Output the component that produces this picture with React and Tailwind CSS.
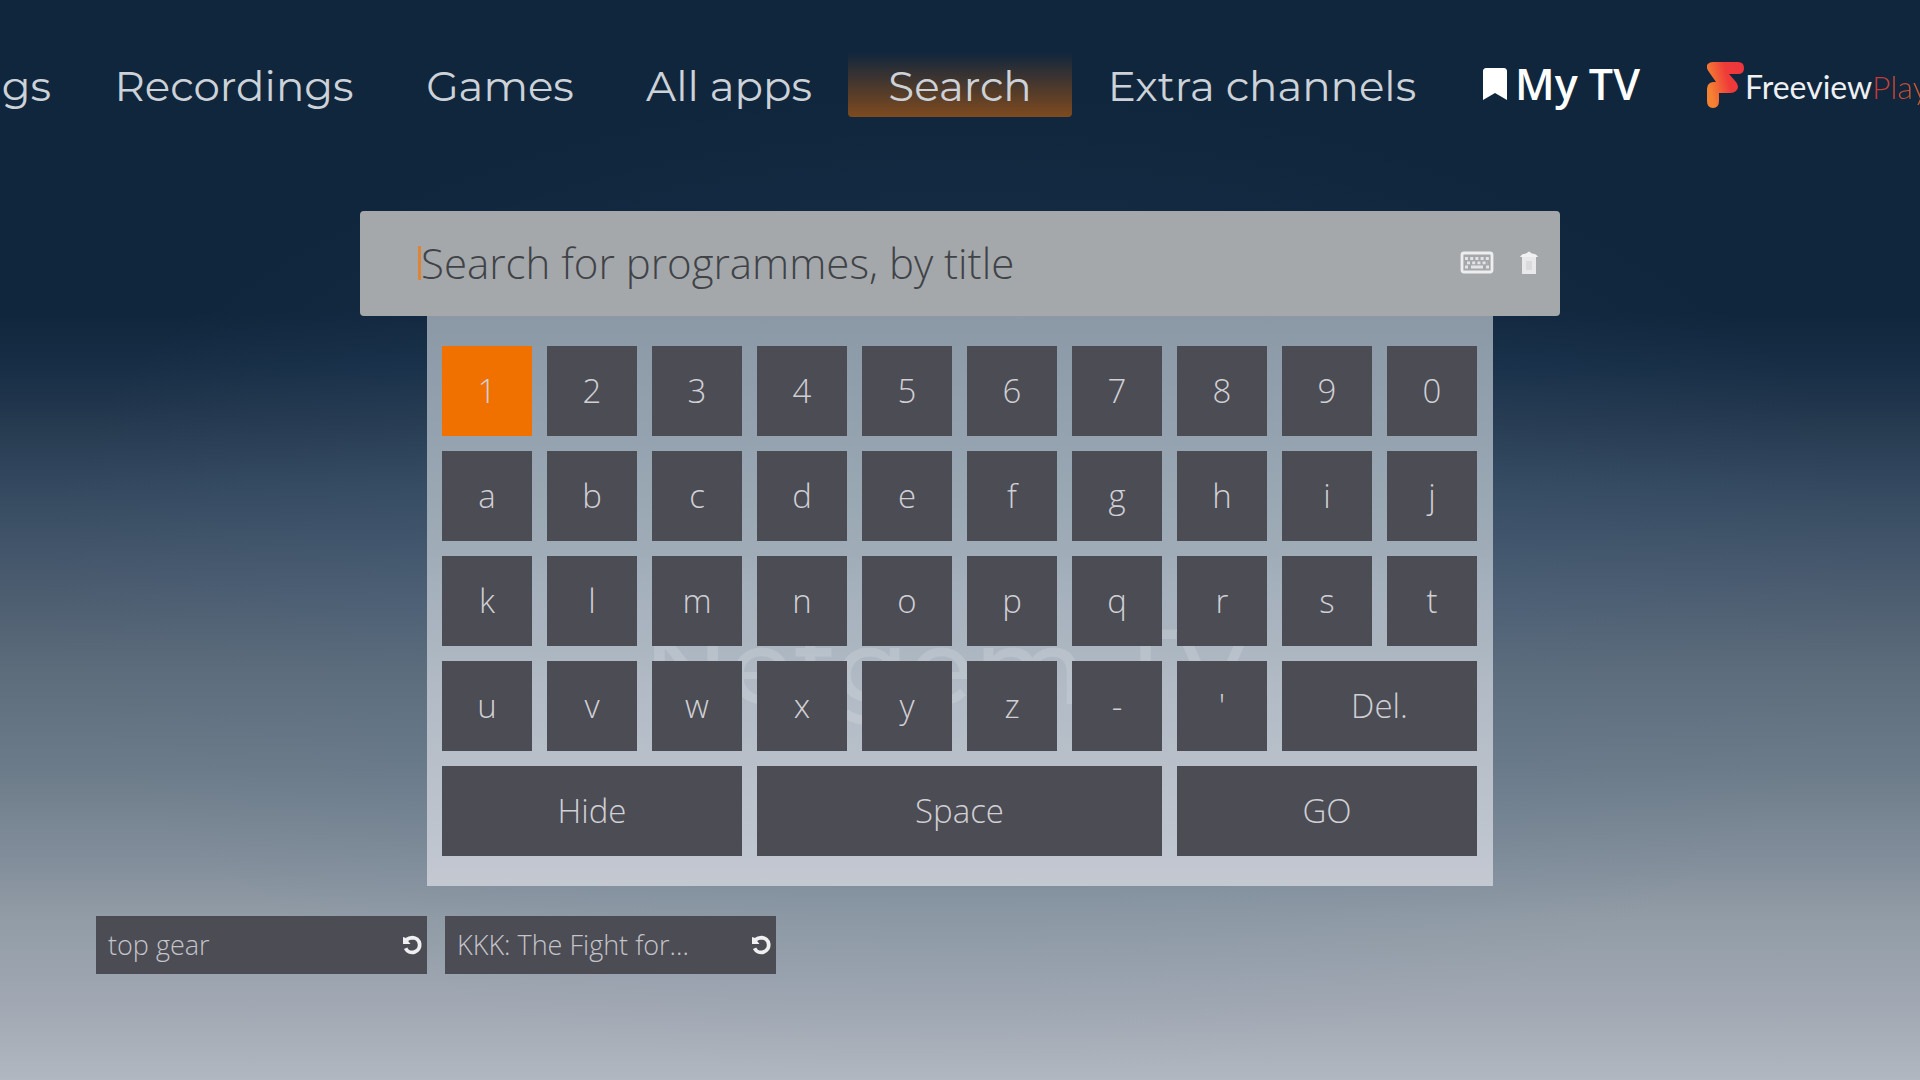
import { FaBookmark } from "react-icons/fa";

const navItems = [
  { label: "Recordings", width: "w-[312px]" },
  { label: "Games", width: "w-[220px]" },
  { label: "All apps", width: "w-[238px]" },
  { label: "Search", width: "w-[224px]", active: true },
  { label: "Extra channels", width: "w-[380px]" },
];

const keys = [
  ..."1234567890abcdefghijklmnopqrstuvwxyz-'".split("").map((k) => ({ label: k, span: "col-span-1" })),
  { label: "Del.", span: "col-span-2" },
  { label: "Hide", span: "col-span-3" },
  { label: "Space", span: "col-span-4" },
  { label: "GO", span: "col-span-3" },
];

const recents = ["top gear", "KKK: The Fight for..."];

function FreeviewMark() {
  return (
    <svg viewBox="0 0 38 46" className="h-[46px] w-[38px] shrink-0" aria-hidden="true">
      <defs>
        <linearGradient id="mark" x1="0" y1="0.3" x2="1" y2="0">
          <stop offset="0" stopColor="#f58233" />
          <stop offset="0.5" stopColor="#ef3b3a" />
          <stop offset="1" stopColor="#ee343c" />
        </linearGradient>
      </defs>
      <path
        fill="url(#mark)"
        d="M6 0H31Q37 0 37 6Q37 12 31 12H22L29 20Q33 25 29 29Q27 31 23 31H12V39Q12 46 6 46Q0 46 0 39V27Q0 21 6 20H9L2 10Q-1 6 0 3Q2 0 6 0Z"
      />
    </svg>
  );
}

function KeyboardIcon() {
  return (
    <svg viewBox="0 0 34 24" className="h-6 w-[34px]" fill="none" aria-hidden="true">
      <rect x="2" y="2" width="30" height="19" rx="2" stroke="#eeeeef" strokeWidth="2.8" />
      <g stroke="#e4e4e6" strokeWidth="2.8">
        <path d="M5 7.5H30" strokeDasharray="3 2.2" />
        <path d="M7 11.8H28" strokeDasharray="3 2.2" />
        <path d="M5 16H8M11 16H23M26 16H29" />
      </g>
    </svg>
  );
}

function TrashIcon() {
  return (
    <svg viewBox="0 0 18 24" className="h-6 w-[18px]" aria-hidden="true">
      <path fill="#f1f1f2" d="M0 6Q1 3 6 2.5L9 0.5L12 2.5Q17 3 18 6Z" />
      <path fill="#e9e9eb" d="M2 6H16V23H2Z" />
      <path fill="#dadadd" d="M6 10H12V19H6Z" />
    </svg>
  );
}

function RecallIcon() {
  return (
    <svg viewBox="0 0 20 20" className="size-5" aria-hidden="true">
      <path d="M4.5 4.8Q7 2.6 10.5 2.6A7.4 7.4 0 1 1 3.6 13.2" fill="none" stroke="#f0f0f2" strokeWidth="3.8" />
      <path d="M1 2V9H8.5L6.5 6.5L4 3Z" fill="#f0f0f2" />
    </svg>
  );
}

export default function App() {
  return (
    <div className="relative flex min-h-screen flex-col overflow-hidden bg-[linear-gradient(to_bottom,#10263d_0%,#10263d_29%,#172e46_34%,#25394f_39%,#34495f_45%,#4a5b6f_54%,#5d6c7b_62%,#6c7b89_71%,#808c99_79%,#919ca6_85%,#a1a8b3_93%,#b0b7c0_100%)] font-['Open_Sans',sans-serif] font-light">
      <div className="pointer-events-none absolute inset-0 bg-[radial-gradient(ellipse_48%_46%_at_50%_54%,rgba(70,110,150,0.22),rgba(70,110,150,0)_100%)]" />

      <nav className="relative flex h-[117px] items-end overflow-hidden whitespace-nowrap font-['Montserrat',sans-serif] text-[42px] leading-[62px] font-normal text-[#ccd2d8]">
        <a href="#settings" className="flex h-[65px] w-[78px] shrink-0 items-center justify-end pt-[2px] pr-[27px]">gs</a>
        {navItems.map((item) => (
          <a
            key={item.label}
            href={`#${item.label}`}
            className={`${item.width} ${item.active ? "rounded-b bg-linear-to-b from-transparent to-[#7f4a1e]" : ""} flex h-[65px] shrink-0 items-center justify-center pt-[2px]`}
          >
            {item.label}
          </a>
        ))}
        <a href="#mytv" className="flex h-[65px] w-[219px] shrink-0 items-center justify-center gap-2 pb-[2px] font-['Open_Sans',sans-serif] text-[43px] font-semibold text-white">
          <FaBookmark className="h-8 w-6" />
          My TV
        </a>
        <a href="#freeview" className="flex h-[65px] shrink-0 items-center pl-9 font-['Lato',sans-serif] text-[32px] font-normal text-[#eef0f2]">
          <FreeviewMark />
          <span className="pt-1">Freeview<span className="bg-linear-to-r from-[#c93238] to-[#c9602f] bg-clip-text font-light text-transparent">Play</span></span>
        </a>
      </nav>

      <main className="relative mt-[94px] flex flex-col">
        <form className="mx-auto flex h-[105px] w-full max-w-[1200px] items-center rounded bg-[#a5a8ab] pr-[22px] pb-[2px] pl-[58px]">
          <span className="h-[34px] w-[3px] bg-[#dc8438]" />
          <input
            type="text"
            aria-label="Search for programmes, by title"
            placeholder="Search for programmes, by title"
            className="min-w-0 flex-1 bg-transparent text-[42px] text-[#3f4347] outline-none placeholder:text-[#3f4347]"
          />
          <button type="button" aria-label="Keyboard" className="mr-[26px]"><KeyboardIcon /></button>
          <button type="button" aria-label="Clear"><TrashIcon /></button>
        </form>

        <section aria-label="Keyboard" className="relative mx-auto w-full max-w-[1066px] bg-[linear-gradient(to_bottom,#8b99a7,#9ba9b5_35%,#b1bac5_65%,#c3c8d1)] py-[30px] pr-4 pl-[15px]">
          <div className="pointer-events-none absolute inset-x-0 top-[290px] pl-[216px] font-['Montserrat',sans-serif] text-[106px] leading-[120px] font-medium whitespace-pre text-white/15" aria-hidden="true">Netgem TV</div>
          <div className="relative grid grid-cols-10 gap-[15px]">
            {keys.map((key, i) => (
              <button
                key={key.label}
                type="button"
                className={`${key.span} ${i === 0 ? "bg-[#f07000]" : "bg-[#4c4c55]"} h-[90px] text-[33px] text-[#d0d0d4]`}
              >
                {key.label}
              </button>
            ))}
          </div>
        </section>

        <div className="mt-[30px] flex gap-[18px] pl-24">
          {recents.map((label) => (
            <button key={label} type="button" className="flex h-[58px] w-[331px] items-center justify-between bg-[#4c4c55] pr-[5px] pl-3 text-[27px] text-[#c4c4c9]">
              <span>{label}</span>
              <RecallIcon />
            </button>
          ))}
        </div>
      </main>
    </div>
  );
}
